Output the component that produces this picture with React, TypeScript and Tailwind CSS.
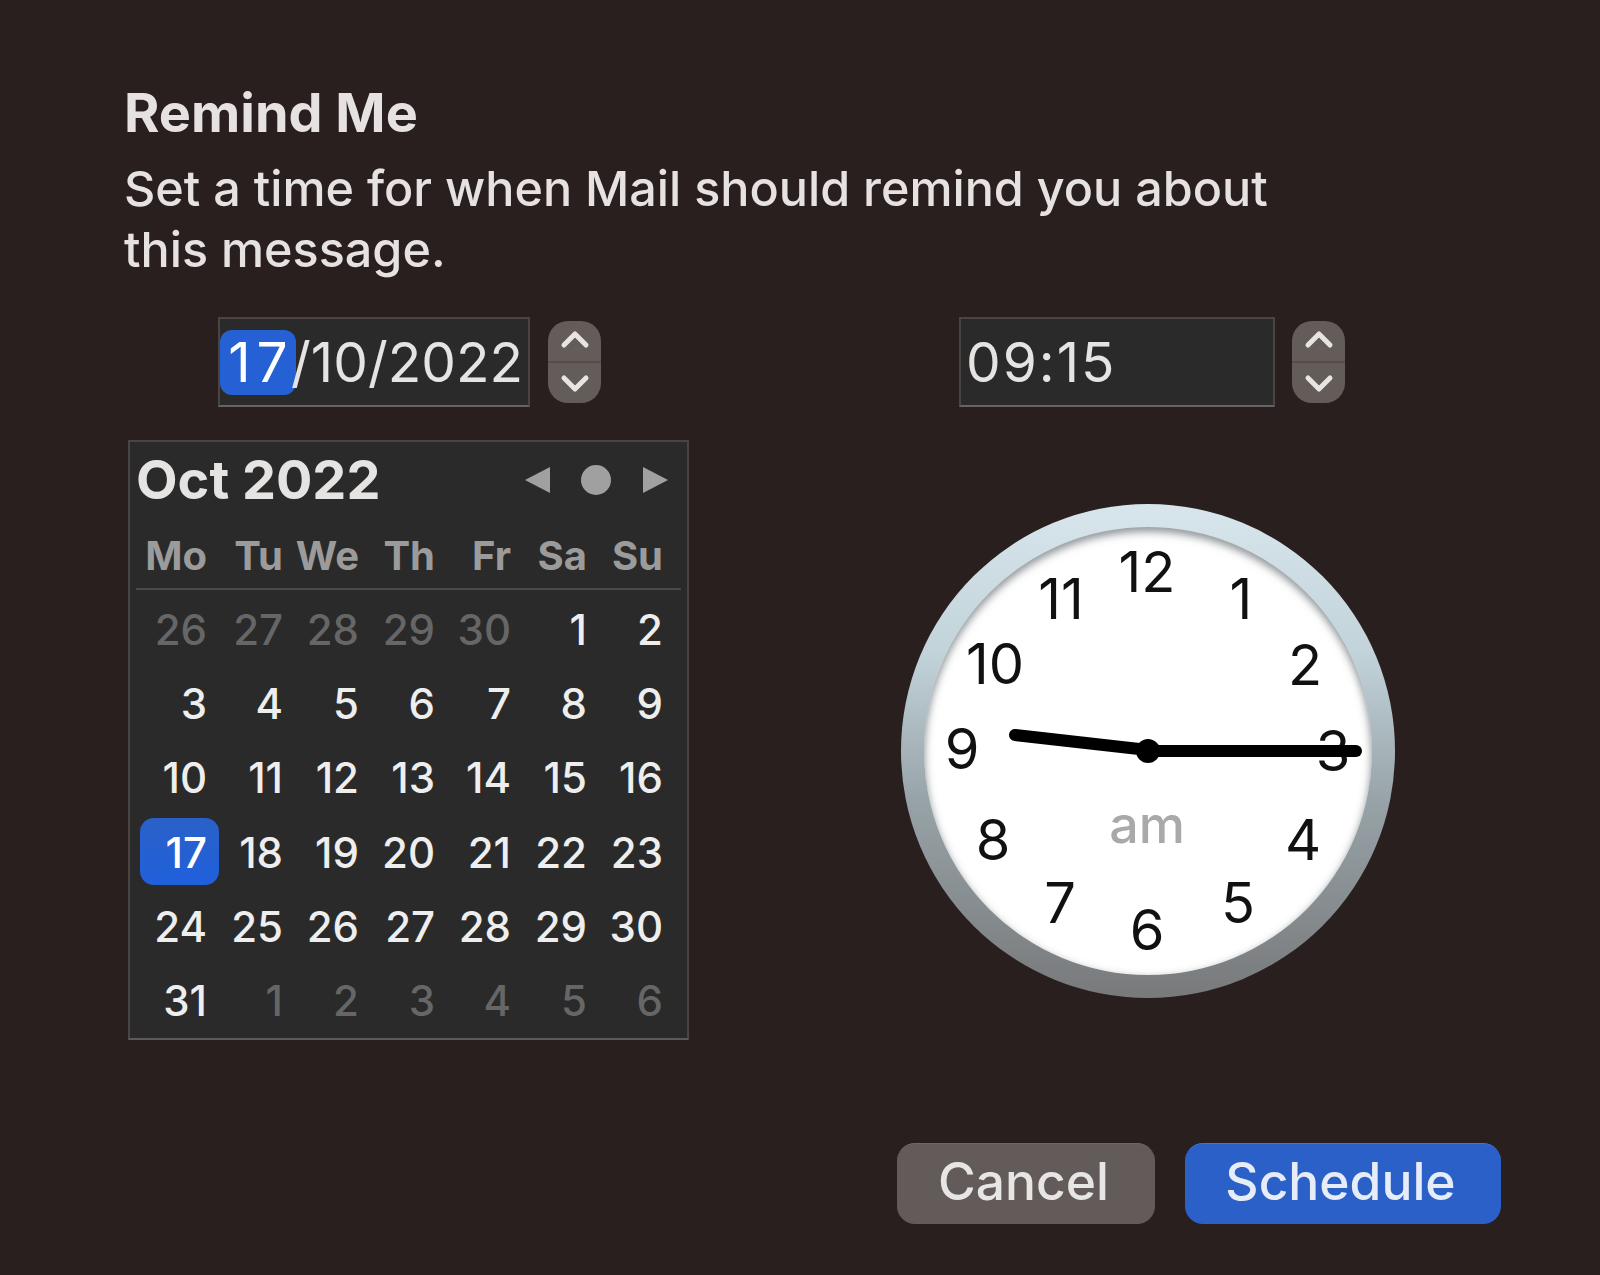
const font = { fontFamily: 'Inter, "Liberation Sans", sans-serif' }

const weekdays = ['Mo', 'Tu', 'We', 'Th', 'Fr', 'Sa', 'Su']

const days = [
  { n: 26, dim: true }, { n: 27, dim: true }, { n: 28, dim: true }, { n: 29, dim: true }, { n: 30, dim: true },
  ...Array.from({ length: 31 }, (_, i) => ({ n: i + 1, dim: false })),
  { n: 1, dim: true }, { n: 2, dim: true }, { n: 3, dim: true }, { n: 4, dim: true }, { n: 5, dim: true }, { n: 6, dim: true },
]

const clockNumbers = [
  { t: '12', x: 246, y: 76 },
  { t: '1', x: 340, y: 103 },
  { t: '2', x: 404, y: 169 },
  { t: '3', x: 432, y: 255 },
  { t: '4', x: 402, y: 344 },
  { t: '5', x: 337, y: 407 },
  { t: '6', x: 246, y: 434 },
  { t: '7', x: 159, y: 407 },
  { t: '8', x: 92, y: 344 },
  { t: '9', x: 61, y: 253 },
  { t: '10', x: 94, y: 168 },
  { t: '11', x: 160, y: 103 },
]

function Stepper() {
  return (
    <div className="flex h-[82px] w-[53px] flex-col items-center justify-between rounded-[20px] bg-[#645c59] pb-[9px] pt-[8px]">
      <svg width="32" height="20" viewBox="0 0 32 20" fill="none" stroke="#e8e4e2" strokeWidth="5" strokeLinecap="round" strokeLinejoin="round">
        <path d="M5 16 16 5l11 11" />
      </svg>
      <div className="h-[2px] w-full bg-[#544d4b]" />
      <svg width="32" height="20" viewBox="0 0 32 20" fill="none" stroke="#e8e4e2" strokeWidth="5" strokeLinecap="round" strokeLinejoin="round">
        <path d="M5 4l11 11L27 4" />
      </svg>
    </div>
  )
}

function Calendar() {
  return (
    <div className="ml-[3px] h-[600px] w-[561px] border-2 border-[#4a4543] border-b-[#5e5856] bg-[#2a2a2a] pl-[1px] pt-[9px]">
      <div className="flex h-[58px] items-center pl-[5px] pr-[19px]">
        <span className="flex-1 text-[54px] font-bold leading-none text-[#e6e4e3]">Oct 2022</span>
        <svg width="143" height="30" viewBox="0 0 143 30" fill="#a0a0a0">
          <path d="M0 15 25 2v26z" />
          <circle cx="71" cy="15" r="15" />
          <path d="M118 2l25 13-25 13z" />
        </svg>
      </div>
      <div className="mt-[22px] grid h-[49px] grid-cols-[repeat(7,76px)] items-center text-right text-[40px] font-bold leading-none text-[#9b9b9b]">
        {weekdays.map((d) => (
          <div key={d}>{d}</div>
        ))}
      </div>
      <div className="ml-[5px] mt-[8px] h-[2px] w-[545px] bg-[#4a4a4a]" />
      <div className="mt-[3px] grid grid-cols-[repeat(7,76px)] grid-rows-[repeat(6,74.2px)] items-center text-right text-[42px] font-medium leading-none">
        {days.map((d, i) => {
          const selected = !d.dim && d.n === 17
          return (
            <div
              key={i}
              className={
                selected
                  ? '-mr-[12px] mb-[3px] ml-[9px] flex h-[67px] items-center justify-end rounded-[14px] bg-linear-to-b from-[#2a60c8] to-[#2060dc] pr-[12px] pt-[3px] text-white'
                  : d.dim
                    ? 'text-[#666666]'
                    : 'text-[#eeeeee]'
              }
            >
              {d.n}
            </div>
          )
        })}
      </div>
    </div>
  )
}

function Clock() {
  return (
    <svg width="494" height="494" viewBox="0 0 494 494" className="mt-[97px]">
      <defs>
        <linearGradient id="ring" x1="0" y1="0" x2="0" y2="1">
          <stop offset="0" stopColor="#d8e6ec" />
          <stop offset="0.3" stopColor="#c2d3da" />
          <stop offset="0.6" stopColor="#97a3a8" />
          <stop offset="1" stopColor="#78797b" />
        </linearGradient>
        <filter id="soft" x="-10%" y="-10%" width="120%" height="120%">
          <feGaussianBlur stdDeviation="5" />
        </filter>
        <clipPath id="face">
          <circle cx="247" cy="247" r="224" />
        </clipPath>
      </defs>
      <circle cx="247" cy="247" r="247" fill="url(#ring)" />
      <circle cx="247" cy="247" r="224" fill="#ffffff" />
      <g clipPath="url(#face)">
        <circle cx="247" cy="251" r="229" fill="none" stroke="#6f777b" strokeWidth="9" filter="url(#soft)" />
      </g>
      {clockNumbers.map((n) => (
        <text key={n.t} x={n.x} y={n.y} dy="12" textAnchor="middle" fontSize="56" fill="#111111" fontFamily='Inter, "Liberation Sans", sans-serif'>
          {n.t}
        </text>
      ))}
      <text x="246" y="329" dy="10" textAnchor="middle" fontSize="52" fontWeight="500" fill="#a9a9a9" fontFamily='Inter, "Liberation Sans", sans-serif'>
        am
      </text>
      <path d="M247 246 114 231" stroke="#000" strokeWidth="12" strokeLinecap="round" />
      <path d="M247 247H455" stroke="#000" strokeWidth="12" strokeLinecap="round" />
      <circle cx="247" cy="247" r="12" fill="#000" />
    </svg>
  )
}

export default function App() {
  return (
    <div className="h-[1275px] w-[1600px] overflow-hidden bg-[#2a1f1f] pl-[124px] pt-[82px]" style={font}>
      <h1 className="text-[54px] font-bold leading-[61px] text-[#e6e2e1]">Remind Me</h1>
      <p className="mt-[15px] w-[1250px] text-[48.5px] font-medium leading-[61px] text-[#e6e2e1]">
        Set a time for when Mail should remind you about
        <br />
        this message.
      </p>

      <div className="mt-[37px] flex">
        <div className="w-[777px]">
          <div className="ml-[94px] flex items-center gap-[18px]">
            <div className="flex h-[90px] w-[312px] items-center border-2 border-[#4a4543] border-b-[#6a6461] bg-[#2a2a2a] text-[55px] leading-none text-[#e6e4e3]">
              <span className="flex h-[65px] w-[76px] shrink-0 items-center justify-center rounded-[12px] bg-[#2560d4] pl-[6px] tracking-[6px] text-white">17</span>
              <span className="-ml-[5px]">/10/2022</span>
            </div>
            <Stepper />
          </div>
          <div className="mt-[33px] pl-[1px]">
            <Calendar />
          </div>
        </div>

        <div>
          <div className="ml-[58px] flex items-center gap-[17px]">
            <div className="flex h-[90px] w-[316px] items-center border-2 border-[#4a4543] border-b-[#6a6461] bg-[#2a2a2a] pl-[5px] text-[55px] leading-none tracking-[2px] text-[#e6e4e3]">
              09:15
            </div>
            <Stepper />
          </div>
          <Clock />
        </div>
      </div>

      <div className="mt-[103px] flex justify-end gap-[30px] pr-[99px] text-[51.5px] font-medium leading-none">
        <button className="h-[81px] w-[258px] rounded-[18px] border-t border-t-[#6e6764] bg-[#625b59] pb-[4px] pr-[5px] text-[#e8e6e5]">Cancel</button>
        <button className="h-[81px] w-[316px] rounded-[18px] border-t border-t-[#3f74d8] bg-[#2a60c8] pb-[4px] pr-[5px] text-[#e6edf8]">Schedule</button>
      </div>
    </div>
  )
}
